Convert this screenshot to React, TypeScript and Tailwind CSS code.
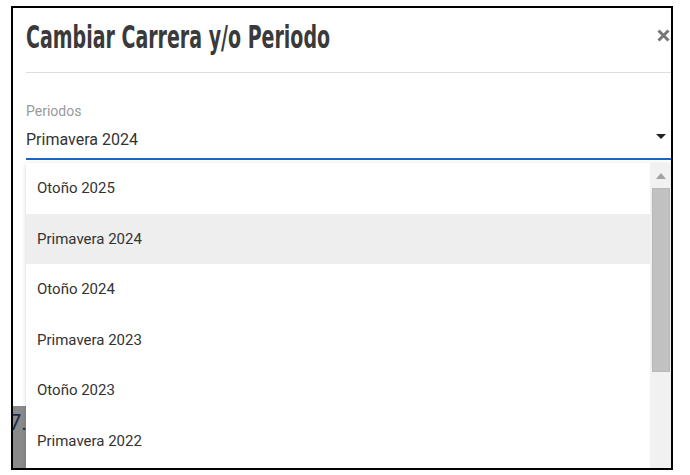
import React from "react";

const periodos = [
    "Otoño 2025",
    "Primavera 2024",
    "Otoño 2024",
    "Primavera 2023",
    "Otoño 2023",
    "Primavera 2022",
];

function Scrollbar() {
    return (
        <div className="absolute right-0 top-0 bottom-0 w-[21px] bg-[#f1f1f1] flex flex-col items-center">
            <div className="h-[25px] flex items-center justify-center">
                <svg width="10" height="6" viewBox="0 0 10 6">
                    <path d="M5 0 L10 6 L0 6 Z" fill="#a3a3a3" />
                </svg>
            </div>
            <div className="w-[18px] h-[184px] bg-[#c1c1c1] border border-[#b8b8b8]" />
        </div>
    );
}

export default function App() {
    return (
        <div
            className="w-[690px] h-[475px] bg-white pt-[6px] pl-[11px]"
            style={{ fontFamily: "Roboto, 'Liberation Sans', sans-serif" }}
        >
            <div className="relative w-[662px] h-[464px] border-2 border-black overflow-hidden bg-white">
                {/* header */}
                <div className="ml-[13px] h-[65px] flex items-start justify-between border-b border-[#dedede]">
                    <h1
                        className="mt-[12px] text-[32px] leading-[34px] text-[#3a3a3a] font-bold whitespace-nowrap scale-x-[0.66] origin-left"
                        style={{ fontFamily: "'DejaVu Sans Condensed', 'DejaVu Sans', sans-serif" }}
                    >
                        Cambiar Carrera y/o Periodo
                    </h1>
                    <svg width="13" height="13" viewBox="0 0 13 13" className="mt-[21px] mr-[1px]">
                        <path d="M1.5 1.5 L11.5 11.5 M11.5 1.5 L1.5 11.5" stroke="#777" strokeWidth="3" />
                    </svg>
                </div>

                {/* select */}
                <div className="ml-[13px] pt-[29px] border-b-2 border-[#1a66c4]">
                    <div className="text-[14px] leading-[18px] text-[#9a9a9a]">Periodos</div>
                    <div className="flex items-center justify-between h-[38px] pt-[2px]">
                        <span className="text-[16px] text-[#333]">Primavera 2024</span>
                        <svg width="10" height="5" viewBox="0 0 10 5" className="mr-[5px] mb-[8px]">
                            <path d="M0 0 L10 0 L5 5 Z" fill="#222" />
                        </svg>
                    </div>
                </div>

                {/* dropdown list */}
                <div className="relative flex">
                    <div className="w-[13px] h-[310px] flex flex-col justify-end">
                        <div className="h-[64px] bg-[#8a8a8a] text-[#1d2a4a] text-[22px] leading-none pt-[6px] overflow-hidden">
                            <span className="-ml-[4px]">7.</span>
                        </div>
                    </div>
                    <div className="relative flex-1 h-[310px] mt-[3px] bg-white shadow-[0_1px_4px_rgba(0,0,0,0.18)]">
                        <ul className="pr-[21px]">
                            {periodos.map((p, i) => (
                                <li
                                    key={p}
                                    className={
                                        "h-[50.6px] flex items-center pl-[11px] text-[15px] text-[#333] " +
                                        (i === 1 ? "bg-[#eeeeee]" : "")
                                    }
                                >
                                    {p}
                                </li>
                            ))}
                        </ul>
                        <Scrollbar />
                    </div>
                </div>
            </div>
        </div>
    );
}
